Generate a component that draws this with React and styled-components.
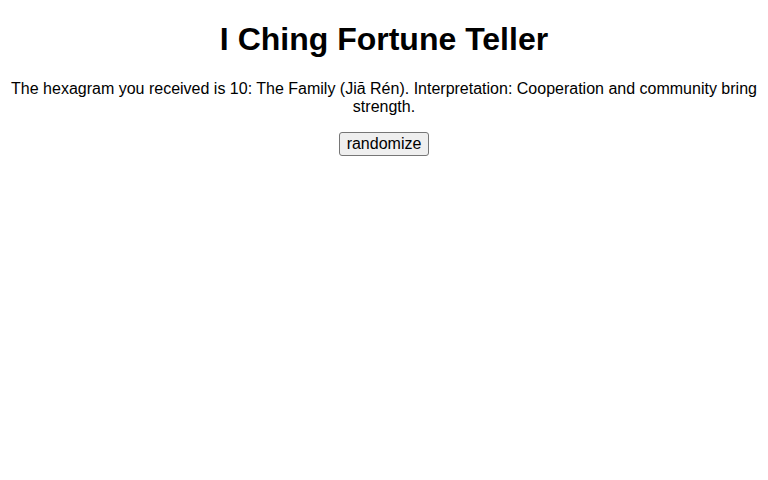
import React, { useState } from 'react';
import styled, { createGlobalStyle } from 'styled-components';

const GlobalStyle = createGlobalStyle`
  body {
    margin: 0;
    font-family: "Liberation Sans", Arial, sans-serif;
    color: #000;
    background: #fff;
  }
`;

const Page = styled.div`
  padding: 0 8px;
  text-align: center;
`;

const Title = styled.h1`
  font-size: 32px;
  font-weight: bold;
  margin: 21.44px 0;
`;

const Reading = styled.p`
  font-size: 16px;
  line-height: 18px;
  margin: 16px 0;
`;

const RandomButton = styled.button`
  font-family: inherit;
  font-size: 16px;
  color: #000;
  background: #efefef;
  border: 1px solid #767676;
  border-radius: 3px;
  padding: 2px 7px;
  cursor: pointer;

  &:hover {
    background: #e5e5e5;
  }
`;

const hexagrams = [
  { number: 10, name: 'The Family (Jiā Rén)', meaning: 'Cooperation and community bring strength.' },
  { number: 1, name: 'The Creative (Qián)', meaning: 'Persistent effort leads to success.' },
  { number: 2, name: 'The Receptive (Kūn)', meaning: 'Patience and openness bring reward.' },
  { number: 11, name: 'Peace (Tài)', meaning: 'Harmony opens the way forward.' },
  { number: 29, name: 'The Abysmal (Kǎn)', meaning: 'Stay true through danger and you will pass.' },
];

const App = () => {
  const [current, setCurrent] = useState(hexagrams[0]);

  const randomize = () => {
    setCurrent(hexagrams[Math.floor(Math.random() * hexagrams.length)]);
  };

  return (
    <>
      <GlobalStyle />
      <Page>
        <Title>I Ching Fortune Teller</Title>
        <Reading>
          The hexagram you received is {current.number}: {current.name}. Interpretation: {current.meaning}
        </Reading>
        <RandomButton onClick={randomize}>randomize</RandomButton>
      </Page>
    </>
  );
};

export default App;
